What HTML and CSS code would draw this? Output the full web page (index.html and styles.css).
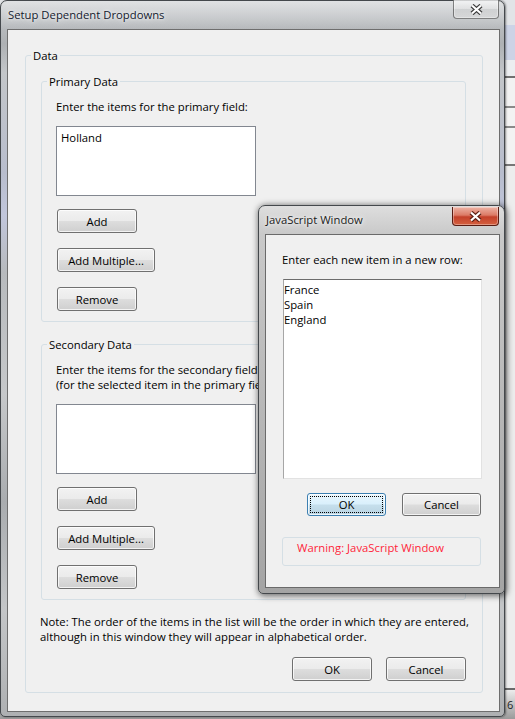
FILE: index.html
```html
<!DOCTYPE html>
<html lang="en">
<head>
    <meta charset="UTF-8">
    <title>Setup Dependent Dropdowns</title>
    <link rel="stylesheet" href="styles.css">
</head>
<body>
<div class="desk">

    <div class="win main-win">
        <div class="titlebar">
            <span class="title">Setup Dependent Dropdowns</span>
            <button class="close-btn">
                <svg width="13" height="11" viewBox="0 0 13 11"><path class="x-line" d="M2 1.5l9 8M11 1.5l-9 8"/><path class="x-fill" d="M2 1.5l9 8M11 1.5l-9 8"/></svg>
            </button>
        </div>
        <div class="client">
            <fieldset class="group">
                <legend>Data</legend>
                <div class="data-body">

                    <fieldset class="group sub-group">
                        <legend>Primary Data</legend>
                        <div class="sub-body">
                            <p>Enter the items for the primary field:</p>
                            <div class="listbox">Holland</div>
                            <div class="btn-stack">
                                <button class="btn">Add</button>
                                <button class="btn btn-wide">Add Multiple...</button>
                                <button class="btn">Remove</button>
                            </div>
                        </div>
                    </fieldset>

                    <fieldset class="group sub-group">
                        <legend>Secondary Data</legend>
                        <div class="sub-body">
                            <p class="nowrap">Enter the items for the secondary field<br>(for the selected item in the primary field):</p>
                            <div class="listbox"></div>
                            <div class="btn-stack">
                                <button class="btn">Add</button>
                                <button class="btn btn-wide">Add Multiple...</button>
                                <button class="btn">Remove</button>
                            </div>
                        </div>
                    </fieldset>

                    <p class="note">Note: The order of the items in the list will be the order in which they are entered,<br>although in this window they will appear in alphabetical order.</p>

                    <div class="actions">
                        <button class="btn">OK</button>
                        <button class="btn">Cancel</button>
                    </div>
                </div>
            </fieldset>
        </div>
    </div>

    <!-- popup asking for several rows at once -->
    <div class="win js-win">
        <div class="titlebar">
            <span class="title">JavaScript Window</span>
            <button class="close-btn close-red">
                <svg width="13" height="11" viewBox="0 0 13 11"><path class="x-line" d="M2 1.5l9 8M11 1.5l-9 8"/><path class="x-fill" d="M2 1.5l9 8M11 1.5l-9 8"/></svg>
            </button>
        </div>
        <div class="client js-client">
            <p>Enter each new item in a new row:</p>
            <div class="entry">
                <div>France</div>
                <div>Spain</div>
                <div>England</div>
            </div>
            <div class="js-actions">
                <button class="btn btn-js btn-default">OK</button>
                <button class="btn btn-js">Cancel</button>
            </div>
            <div class="warning">Warning: JavaScript Window</div>
        </div>
    </div>

    <span class="desk-text">6</span>
</div>
</body>
</html>
```

FILE: styles.css
```css
*{
    box-sizing: border-box;
}
body{
    margin: 0;
    font: 11.3px/15px "Open Sans", sans-serif;
    color: #000;
}
p{
    margin: 0;
}
.nowrap{
    white-space: nowrap;
}

/* what shows behind the glass */
.desk{
    position: relative;
    width: 515px;
    height: 719px;
    overflow: hidden;
    background:
        linear-gradient(to bottom, #e2e4e7 0, #e2e4e7 25px, #ccd3e6 25px, #ccd3e6 60px, #eceef0 60px, #eceef0 76px, #707070 76px, #707070 78px, #f2f2f2 78px, #f2f2f2 106px, #8a8a8a 106px, #8a8a8a 108px, #f3f3f3 108px, #f3f3f3 126px, #8a8a8a 126px, #8a8a8a 128px, #f3f3f3 128px, #f3f3f3 164px, #777 164px, #777 166px, #ededed 166px, #ededed 688px, #6a6a6a 688px, #6a6a6a 690px, #ececec 690px, #9a9a9a 719px);
}
.desk-text{
    position: absolute;
    left: 507px;
    top: 697px;
    font-size: 11px;
    color: #222;
}

/* aero frame */
.win{
    display: flex;
    flex-direction: column;
    border: 1px solid #44484c;
    border-radius: 7px 7px 5px 5px;
}
.main-win{
    width: 505px;
    height: 717px;
    background:
        linear-gradient(to bottom, rgba(255,255,255,.45), rgba(255,255,255,0) 28px),
        linear-gradient(to bottom, #c6c9cc 0%, #aeb1b4 6%, #c3c6c9 10%, #b8bdcd 24%, #c1c6db 30%, #b7babd 38%, #c6c8ca 55%, #a9acaf 70%, #c4c6c8 85%, #aeb0b2 100%);
    box-shadow: 1px 0 2px rgba(0,0,0,.45);
}
.titlebar{
    display: flex;
    align-items: flex-start;
    height: 28px;
    flex-shrink: 0;
    padding-left: 7px;
}
.title{
    margin-top: 6px;
    color: #14202e;
    text-shadow: 0 0 7px rgba(255,255,255,.95), 0 0 3px rgba(255,255,255,.8);
}
.close-btn{
    display: flex;
    align-items: center;
    justify-content: center;
    margin: -1px 5px 0 auto;
    width: 46px;
    height: 19px;
    padding: 0;
    border: 1px solid rgba(55,55,55,.6);
    border-top: 0;
    border-radius: 0 0 4px 4px;
    background: linear-gradient(rgba(255,255,255,.6), rgba(235,235,235,.45) 50%, rgba(200,200,200,.4) 50%, rgba(225,225,225,.55));
    box-shadow: inset 0 0 0 1px rgba(255,255,255,.35);
}
.close-btn svg{
    fill: none;
}
.x-line{
    stroke: #3c3c3c;
    stroke-width: 4.4;
}
.x-fill{
    stroke: #fff;
    stroke-width: 2.2;
}
.close-red{
    margin-top: 1px;
    width: 47px;
    border-color: #5a1c12;
    background: linear-gradient(#edb3a5 0%, #dc7b66 45%, #c4412a 55%, #d4603f 100%);
}
.close-red .x-line{
    stroke: #5b2014;
}

/* dialog area */
.client{
    flex: 1;
    margin: 0 4px 4px 6px;
    border: 1px solid #6e6e6e;
    background: #f0f0f0;
    padding: 18px 16px 0 17px;
}

/* group boxes */
.group{
    margin: 0;
    padding: 0;
    min-width: 0;
    border: 1px solid #d5dfe5;
    border-radius: 3px;
}
.group>legend{
    margin-left: 5px;
    padding: 0 2px;
    line-height: 15px;
}
.data-body{
    padding: 11px 16px 11px 15px;
}
.sub-group+.sub-group{
    margin-top: 15px;
}
.sub-body{
    padding: 10px 14px 10px 14px;
}
.listbox{
    width: 200px;
    height: 70px;
    margin-top: 12px;
    padding: 3px 4px;
    border: 1px solid #828790;
    background: #fff;
}
.btn-stack{
    display: flex;
    flex-direction: column;
    align-items: flex-start;
    gap: 15px;
    margin-top: 13px;
    padding-left: 1px;
}

/* win7 push button */
.btn{
    width: 80px;
    height: 24px;
    padding: 0;
    border: 1px solid #707070;
    border-radius: 3px;
    background: linear-gradient(#f2f2f2 0%, #ebebeb 48%, #dddddd 52%, #cfcfcf 100%);
    box-shadow: inset 0 0 0 1px rgba(255,255,255,.75);
    font: inherit;
    color: #000;
}
.btn-wide{
    width: 98px;
}
.note{
    margin: 14px 0 0 -1px;
    white-space: nowrap;
}
.actions{
    display: flex;
    justify-content: flex-end;
    gap: 14px;
    margin-top: 13px;
}

/* javascript popup */
.js-win{
    position: absolute;
    left: 258px;
    top: 205px;
    width: 247px;
    height: 389px;
    background: linear-gradient(#dedede 0, #c9c9c9 28px, #b6b6b6 55%, #a4a4a4 100%);
    box-shadow: 1px 1px 6px 1px rgba(0,0,0,.55);
}
.js-win .title{
    color: #1a1a1a;
}
.js-client{
    margin: 0 4px 5px 6px;
    padding: 17px 0 0 16px;
    border-color: #6a6a6a;
}
.entry{
    width: 199px;
    height: 200px;
    margin: 12px 0 0 1px;
    padding: 2px 0;
    border: 1px solid;
    border-color: #6c6c6c #e2e2e2 #e2e2e2 #a6a6a6;
    background: #fff;
}
.js-actions{
    display: flex;
    justify-content: flex-end;
    gap: 16px;
    width: 198px;
    margin: 14px 0 0 1px;
}
.btn-js{
    width: 79px;
    height: 23px;
}
.btn-default{
    border-color: #3c7fb1;
    background: linear-gradient(#eaf6fd 0%, #d9f0fc 48%, #c6dfec 52%, #b8d3e2 100%);
    outline: 1px dotted #000;
    outline-offset: -4px;
}
.warning{
    width: 199px;
    height: 29px;
    margin-top: 21px;
    padding: 2px 0 0 14px;
    border: 1px solid #d5dfe5;
    border-radius: 3px;
    color: #ff1f3a;
}
```
